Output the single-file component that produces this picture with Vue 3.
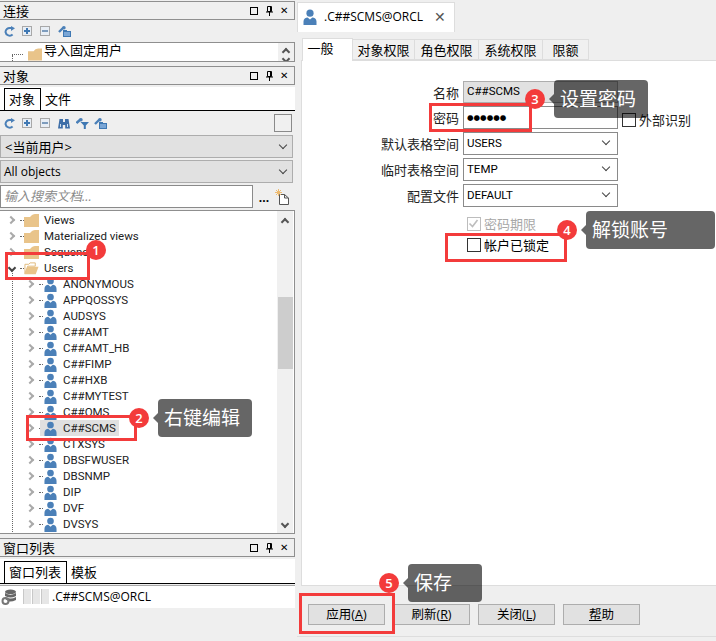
<template>
  <!-- sprite des icônes -->
  <svg class="sprite" aria-hidden="true">
    <symbol id="i-user" viewBox="0 0 14 16">
      <circle cx="7" cy="4.2" r="3.6" fill="#4b80b8" />
      <path d="M0.5 16 V12.5 C0.5 9.8 2.6 8.6 4.6 8.4 L7 10.4 L9.4 8.4 C11.4 8.6 13.5 9.8 13.5 12.5 V16 Z" fill="#4b80b8" />
    </symbol>
    <symbol id="i-folder" viewBox="0 0 15 13">
      <path d="M0 3 H6 L8 1 Q10 0 11 0 H15 V13 H0 Z" fill="#e9c48a" />
    </symbol>
    <symbol id="i-open" viewBox="0 0 16 13">
      <path d="M1 12 V2 H5 L6.5 0.5 H12 V4 H4 Z" fill="#fff" stroke="#e0b877" stroke-width="1" />
      <path d="M0.5 12.5 L3.5 4.5 H15.5 L12.5 12.5 Z" fill="#e9c48a" />
    </symbol>
    <symbol id="i-refresh" viewBox="0 0 11 11">
      <path d="M8.6 8.6 A4.3 4.3 0 0 1 1.5 6 A4.2 4.2 0 0 1 6 2 H8" fill="none" stroke="#4b80b8" stroke-width="2" />
      <path d="M7 0 L11 2.2 L7 5 Z" fill="#4b80b8" />
    </symbol>
    <symbol id="i-plus" viewBox="0 0 10 10">
      <rect x="0.5" y="0.5" width="9" height="9" fill="#e8eef5" stroke="#a8a8a8" />
      <path d="M2 5 H8 M5 2 V8" stroke="#3f78b3" stroke-width="2" />
    </symbol>
    <symbol id="i-minus" viewBox="0 0 10 10">
      <rect x="0.5" y="0.5" width="9" height="9" fill="#e8eef5" stroke="#a8a8a8" />
      <path d="M2 5 H8" stroke="#7d9cbd" stroke-width="2" />
    </symbol>
    <symbol id="i-keyfolder" viewBox="0 0 13 11">
      <path d="M1 6 L6 1" stroke="#4b80b8" stroke-width="2.4" />
      <circle cx="6" cy="1.8" r="1.7" fill="#4b80b8" />
      <rect x="5.5" y="5.5" width="7" height="5" fill="#7aa6d6" stroke="#3f78b3" />
      <rect x="5" y="4" width="4" height="2" fill="#3f78b3" />
    </symbol>
    <symbol id="i-binoculars" viewBox="0 0 12 11">
      <path d="M1.5 1 H5 V4 H7 V1 H10.5 L12 10.5 H7.2 V7 H4.8 V10.5 H0 Z" fill="#3f6fa8" />
      <path d="M2.5 6 V9 M9.5 6 V9" stroke="#cfe0f2" />
    </symbol>
    <symbol id="i-funnel" viewBox="0 0 13 11">
      <path d="M0.5 5 L5 1" stroke="#4b80b8" stroke-width="2.4" />
      <circle cx="5" cy="1.8" r="1.7" fill="#4b80b8" />
      <path d="M4.5 4 H13 L9.8 7.5 V11 H7.8 V7.5 Z" fill="#3f78b3" />
    </symbol>
    <symbol id="i-pin" viewBox="0 0 7 10">
      <path d="M1.5 0.5 H5.5 V5.5 H1.5 Z M0 6 H7 M3.5 6 V10" fill="none" stroke="#000" />
      <path d="M4.5 0.5 V5.5" stroke="#000" />
    </symbol>
    <symbol id="i-db" viewBox="0 0 16 16">
      <ellipse cx="9.5" cy="2.8" rx="5.5" ry="2.3" fill="#666" />
      <path d="M4 4 Q9.5 7.5 15 4 V7 Q9.5 10 4 7 Z M4 8 Q9.5 11 15 8 V11 Q11 13 8 12.5 L4 10 Z" fill="#666" />
      <circle cx="4.5" cy="12" r="3" fill="none" stroke="#777" stroke-width="2" />
    </symbol>
    <symbol id="i-newdoc" viewBox="0 0 15 16">
      <path d="M4.5 5.5 H9.5 L13.5 9 V15.5 H4.5 Z M9.5 5.5 V9 H13.5" fill="#fff" stroke="#555" />
      <path d="M3.5 0 V7 M0 3.5 H7 M1 1 L6 6 M6 1 L1 6" stroke="#eebb70" />
    </symbol>
  </svg>

  <div class="screen">
    <!-- colonne de gauche -->
    <aside class="left">
      <div class="dock-head first">
        <span>连接</span>
        <span class="dock-btns">
          <i class="btn-box"></i>
          <svg class="btn-pin"><use href="#i-pin" /></svg>
          <span class="btn-x">✕</span>
        </span>
      </div>
      <div class="toolbar t-one">
        <svg class="ic11"><use href="#i-refresh" /></svg>
        <svg class="ic10"><use href="#i-plus" /></svg>
        <svg class="ic10"><use href="#i-minus" /></svg>
        <svg class="ic13"><use href="#i-keyfolder" /></svg>
      </div>
      <div class="fixed-list">
        <span class="dots-h long"></span>
        <svg class="folder"><use href="#i-folder" /></svg>
        <span class="fixed-name">导入固定用户</span>
        <div class="mini-scroll">
          <span class="chev up"></span>
          <span class="chev down"></span>
        </div>
      </div>

      <div class="dock-head second">
        <span>对象</span>
        <span class="dock-btns">
          <i class="btn-box"></i>
          <svg class="btn-pin"><use href="#i-pin" /></svg>
          <span class="btn-x">✕</span>
        </span>
      </div>
      <div class="strip strip-obj">
        <span class="strip-tab on">对象</span>
        <span class="strip-tab">文件</span>
      </div>
      <div class="toolbar t-two">
        <svg class="ic11"><use href="#i-refresh" /></svg>
        <svg class="ic10"><use href="#i-plus" /></svg>
        <svg class="ic10"><use href="#i-minus" /></svg>
        <svg class="ic12"><use href="#i-binoculars" /></svg>
        <svg class="ic13"><use href="#i-funnel" /></svg>
        <svg class="ic13"><use href="#i-keyfolder" /></svg>
        <i class="big-square"></i>
      </div>
      <div class="dd dd-user"><span>&lt;当前用户&gt;</span><span class="chev-d"></span></div>
      <div class="dd dd-all"><span>All objects</span><span class="chev-d"></span></div>
      <div class="search-row">
        <div class="search-input">输入搜索文档...</div>
        <span class="more">...</span>
        <svg class="newdoc"><use href="#i-newdoc" /></svg>
      </div>

      <div class="tree">
        <div class="tree-rows">
          <div v-for="f in folders" :key="f" class="row">
            <span class="arrow"></span>
            <span class="dots-h"></span>
            <svg class="folder-sm"><use href="#i-folder" /></svg>
            <span class="row-name">{{ f }}</span>
          </div>
          <div class="row">
            <span class="arrow open"></span>
            <span class="dots-h"></span>
            <svg class="folder-sm"><use href="#i-open" /></svg>
            <span class="row-name">Users</span>
          </div>
          <div class="children">
            <div v-for="u in users" :key="u" class="row child">
              <span class="arrow"></span>
              <span class="dots-h"></span>
              <span class="who" :class="{ picked: u === 'C##SCMS' }">
                <svg class="user"><use href="#i-user" /></svg>
                <span class="row-name">{{ u }}</span>
              </span>
            </div>
          </div>
        </div>
        <div class="scrollbar">
          <span class="chev up"></span>
          <div class="thumb"></div>
          <span class="chev down"></span>
        </div>
      </div>

      <div class="dock-head third">
        <span>窗口列表</span>
        <span class="dock-btns">
          <i class="btn-box"></i>
          <svg class="btn-pin"><use href="#i-pin" /></svg>
          <span class="btn-x">✕</span>
        </span>
      </div>
      <div class="strip strip-win">
        <span class="strip-tab on wide">窗口列表</span>
        <span class="strip-tab">模板</span>
      </div>
      <div class="win-row">
        <svg class="db"><use href="#i-db" /></svg>
        <i class="swatch"></i><i class="swatch"></i><i class="swatch"></i>
        <span class="win-name">.C##SCMS@ORCL</span>
      </div>
    </aside>

    <!-- zone d'édition -->
    <main class="right">
      <div class="doc-tabs">
        <div class="doc-tab">
          <svg class="doc-user"><use href="#i-user" /></svg>
          <span class="doc-title">.C##SCMS@ORCL</span>
          <span class="doc-close">✕</span>
        </div>
      </div>
      <div class="sheet-tabs">
        <span v-for="(t, i) in sheetTabs" :key="t.name" class="sheet-tab" :class="[t.cls, { on: i === 0 }]">{{ t.name }}</span>
      </div>
      <div class="sheet">
        <div class="form">
          <label>名称</label>
          <div class="field grey">C##SCMS</div>
          <span></span>
          <label>密码</label>
          <div class="field pwd">●●●●●●</div>
          <div class="ext"><i class="check"></i>外部识别</div>
          <template v-for="s in selects" :key="s.label">
            <label>{{ s.label }}</label>
            <div class="field"><span>{{ s.value }}</span><span class="chev-d"></span></div>
            <span></span>
          </template>
        </div>
        <div class="checks">
          <div class="check-row off">
            <i class="check ticked">
              <svg width="11" height="11" viewBox="0 0 11 11"><path d="M1.5 5.5 L4.5 8.5 L9.5 2" fill="none" stroke="#bdbdbd" stroke-width="1.6" /></svg>
            </i>密码期限
          </div>
          <div class="check-row"><i class="check"></i>帐户已锁定</div>
        </div>
      </div>
      <div class="actions">
        <button class="act">应用(<u>A</u>)</button>
        <button class="act">刷新(<u>R</u>)</button>
        <button class="act">关闭(<u>L</u>)</button>
        <button class="act"><u>帮</u>助</button>
      </div>
    </main>

    <!-- annotations par-dessus la capture -->
    <div class="red r1"></div>
    <div class="red r2"></div>
    <div class="red r3"></div>
    <div class="red r4"></div>
    <div class="red r5"></div>
    <span class="badge b1">1</span>
    <span class="badge b2">2</span>
    <span class="badge b3">3</span>
    <span class="badge b4">4</span>
    <span class="badge b5">5</span>
    <div class="tip t2">右键编辑</div>
    <div class="tip t3">设置密码</div>
    <div class="tip t4">解锁账号</div>
    <div class="tip t5">保存</div>
  </div>
</template>

<script setup>
const folders = ['Views', 'Materialized views', 'Sequences']
const users = ['ANONYMOUS', 'APPQOSSYS', 'AUDSYS', 'C##AMT', 'C##AMT_HB', 'C##FIMP', 'C##HXB', 'C##MYTEST', 'C##OMS', 'C##SCMS', 'CTXSYS', 'DBSFWUSER', 'DBSNMP', 'DIP', 'DVF', 'DVSYS']
const sheetTabs = [
  { name: '一般', cls: 's0' },
  { name: '对象权限', cls: 's1' },
  { name: '角色权限', cls: 's2' },
  { name: '系统权限', cls: 's3' },
  { name: '限额', cls: 's4' }
]
const selects = [
  { label: '默认表格空间', value: 'USERS' },
  { label: '临时表格空间', value: 'TEMP' },
  { label: '配置文件', value: 'DEFAULT' }
]
</script>

<style>
html, body { margin: 0; height: 100%; overflow: hidden; background: #efefef; }
</style>

<style scoped>
.sprite { position: absolute; width: 0; height: 0; }
.screen {
  position: relative;
  display: flex;
  width: 716px;
  height: 641px;
  overflow: hidden;
  background: #efefef;
  color: #000;
  font-family: "Open Sans", "Noto Sans CJK SC", sans-serif;
  font-size: 12px;
}
svg { display: block; flex: none; }
i { display: block; flex: none; }

/* gauche */
.left { width: 295px; flex: none; display: flex; flex-direction: column; }
.dock-head {
  height: 19px;
  box-sizing: border-box;
  border: 1px solid #8f8f8f;
  border-left: 0;
  display: flex;
  align-items: center;
  justify-content: space-between;
  padding-left: 3px;
  font-size: 13px;
}
.first { margin-top: 1px; }
.second { margin-top: 4px; }
.third { margin-top: 4px; }
.dock-btns { display: flex; align-items: center; }
.btn-box { width: 6px; height: 6px; border: 1px solid #000; margin-right: 8px; }
.btn-pin { width: 7px; height: 10px; margin-right: 7px; }
.btn-x { width: 12px; font-size: 10px; line-height: 10px; margin-right: 2px; font-family: "DejaVu Sans", sans-serif; }

.toolbar { display: flex; align-items: center; flex: none; }
.t-one { height: 22px; padding-left: 4px; }
.t-two { height: 24px; padding-left: 4px; }
.ic11 { width: 11px; height: 11px; margin-right: 7px; }
.ic10 { width: 10px; height: 10px; margin-right: 8px; }
.ic12 { width: 12px; height: 11px; margin-right: 6px; }
.ic13 { width: 13px; height: 11px; margin-right: 5px; }
.big-square { margin-left: auto; margin-right: 3px; width: 16px; height: 16px; border: 1px solid #8a8a8a; background: #f0f0f0; }

.fixed-list {
  height: 20px;
  box-sizing: border-box;
  border: 1px solid #8f8f8f;
  border-left: 0;
  background: #fff;
  display: flex;
  align-items: center;
  padding-left: 12px;
  position: relative;
}
.dots-h { width: 4px; height: 0; border-top: 1px dotted #666; flex: none; }
.dots-h.long { width: 11px; margin-right: 5px; margin-top: 4px; position: relative; }
.dots-h.long::before { content: ""; position: absolute; left: 0; top: 0; height: 6px; border-left: 1px dotted #666; }
.folder { width: 14px; height: 13px; margin-top: 4px; }
.fixed-name { margin-left: 2px; font-size: 13px; line-height: 16px; margin-top: -5px; }
.mini-scroll { position: absolute; right: 0; top: 0; bottom: 0; width: 16px; background: #f0f0f0; overflow: hidden; }
.mini-scroll .up { position: absolute; left: 5px; top: 6px; }
.mini-scroll .down { position: absolute; left: 5px; top: 13px; }

.chev { display: block; width: 6px; height: 6px; border-left: 2px solid #555; border-top: 2px solid #555; box-sizing: border-box; }
.chev.up { transform: rotate(45deg); }
.chev.down { transform: rotate(225deg); }
.chev-d { width: 6px; height: 6px; box-sizing: border-box; border-right: 1px solid #444; border-bottom: 1px solid #444; transform: rotate(45deg); margin-top: -3px; }

.strip { display: flex; align-items: flex-end; background: #fff; border-bottom: 1px solid #000; box-sizing: border-box; padding-left: 4px; flex: none; font-size: 13px; }
.strip-obj { margin-top: 2px; height: 24px; }
.strip-win { margin-top: 2px; height: 25px; }
.strip-tab { height: 21px; line-height: 21px; padding: 0 4px; }
.strip-tab.on { box-sizing: border-box; height: 22px; border: 1px solid #000; border-bottom: 0; padding: 0 4px; background: #fff; width: 37px; }
.strip-tab.wide { width: 63px; }

.dd {
  width: 293px;
  height: 23px;
  box-sizing: border-box;
  background: #e1e1e1;
  border: 1px solid #adadad;
  display: flex;
  align-items: center;
  justify-content: space-between;
  padding: 0 6px 0 3px;
}
.dd-all { margin-top: 2px; }
.dd-user { padding-left: 4px; font-size: 13px; }
.search-row { display: flex; align-items: center; margin-top: 2px; height: 23px; }
.search-input {
  width: 253px;
  height: 23px;
  box-sizing: border-box;
  background: #fff;
  border: 1px solid #8a8a8a;
  padding-left: 3px;
  line-height: 20px;
  color: #8a8a8a;
  font-style: italic;
  font-size: 13px;
}
.more { width: 22px; text-align: center; font-weight: 700; margin-left: 0; margin-top: 1px; }
.newdoc { width: 15px; height: 16px; }

.tree {
  margin-top: 2px;
  height: 324px;
  box-sizing: border-box;
  border: 1px solid #8f8f8f;
  border-left: 0;
  background: #fff;
  display: flex;
  position: relative;
  overflow: hidden;
}
.tree-rows { flex: 1; padding-top: 1px; min-width: 0; }
.row { height: 16px; display: flex; align-items: center; padding-left: 8px; white-space: nowrap; color: #222; font-family: Roboto, sans-serif; font-size: 11.5px; }
.arrow {
  width: 6px;
  height: 6px;
  box-sizing: border-box;
  border-top: 2px solid #aaa;
  border-right: 2px solid #aaa;
  transform: rotate(45deg);
  flex: none;
  margin-right: 6px;
}
.arrow.open { border-color: #444; transform: rotate(135deg); margin-left: 1px; margin-right: 5px; }
.folder-sm { width: 15px; height: 13px; margin-left: 0; }
.row-name { margin-left: 5px; }
.children { position: relative; }
.children::before { content: ""; position: absolute; left: 12px; top: -5px; bottom: -10px; border-left: 1px dotted #666; }
.child { padding-left: 27px; }
.who { display: flex; align-items: center; height: 16px; }
.user { width: 13px; height: 15px; }
.child .row-name { margin-left: 6px; line-height: 16px; }
.child .dots-h { margin-right: 1px; }
.picked { background: #e0e0e0; margin-left: -4px; padding-left: 4px; padding-right: 3px; }
.scrollbar {
  width: 16px;
  margin-right: 1px;
  background: #f0f0f0;
  flex: none;
  display: flex;
  flex-direction: column;
  align-items: center;
}
.scrollbar .up { margin-top: 8px; }
.scrollbar .down { margin-bottom: 6px; }
.thumb { width: 15px; height: 72px; background: #cdcdcd; margin-top: 72px; margin-bottom: auto; }

.win-row {
  margin-top: 1px;
  height: 23px;
  box-sizing: border-box;
  border-top: 1px solid #a8a8a8;
  background: #fff;
  display: flex;
  align-items: center;
  padding: 0 0 1px 1px;
}
.db { width: 16px; height: 16px; margin-right: 6px; }
.swatch { width: 7px; height: 15px; background: #e6e6e6; border-left: 1px solid #c8c8c8; margin-right: 1px; }
.win-name { margin-left: 2px; }

/* droite */
.right { flex: 1; min-width: 0; display: flex; flex-direction: column; padding-left: 2px; }
.doc-tabs { height: 34px; box-sizing: border-box; padding-top: 2px; flex: none; }
.doc-tab {
  width: 158px;
  height: 30px;
  box-sizing: border-box;
  background: #fff;
  border: 1px solid #ddd;
  border-bottom: 0;
  display: flex;
  align-items: center;
  padding-left: 5px;
}
.doc-user { width: 14px; height: 16px; margin-right: 7px; margin-top: -2px; }
.doc-title { width: 110px; margin-top: -2px; }
.doc-close { font-size: 14px; color: #555; font-weight: 700; font-family: "DejaVu Sans", sans-serif; margin-top: -1px; }

.sheet-tabs { height: 25px; padding-left: 5px; display: flex; align-items: flex-end; flex: none; margin-top: 2px; margin-bottom: -1px; position: relative; z-index: 1; }
.sheet-tab {
  height: 21px;
  line-height: 20px;
  box-sizing: border-box;
  background: #f0f0f0;
  border: 1px solid #ddd;
  border-left: 0;
  text-align: center;
  font-size: 13px;
  margin-bottom: 1px;
}
.s0 { width: 51px; }
.s1 { width: 62px; }
.s2 { width: 64px; }
.s3 { width: 64px; }
.s4 { width: 46px; }
.sheet-tab.on { height: 23px; background: #fff; border: 1px solid #ddd; border-bottom: 0; margin-bottom: 0; line-height: 19px; padding-right: 14px; }

.sheet {
  height: 526px;
  box-sizing: border-box;
  margin-left: 4px;
  background: #fff;
  border-top: 1px solid #ddd;
  border-bottom: 1px solid #ddd;
  border-left: 1px solid #ddd;
  padding-top: 20px;
  flex: none;
}
.form {
  display: grid;
  grid-template-columns: 157px 155px 1fr;
  grid-template-rows: 22px 23px 23px 23px 23px;
  row-gap: 3px;
  column-gap: 4px;
  align-items: center;
}
.form label { text-align: right; font-size: 13px; color: #222; }
.field {
  height: 100%;
  box-sizing: border-box;
  border: 1px solid #8a8a8a;
  display: flex;
  align-items: center;
  justify-content: space-between;
  padding: 0 8px 2px 3px;
  font-family: Roboto, sans-serif;
  font-size: 11.5px;
}
.field.grey { background: #e1e1e1; border-color: #adadad; }
.field.pwd { font-size: 7.5px; letter-spacing: 0; font-family: "DejaVu Sans", sans-serif; padding: 0 0 0 3px; justify-content: flex-start; }
.ext { display: flex; align-items: center; font-size: 13px; margin-top: 4px; color: #222; }
.ext .check { margin-right: 3px; }
.check { width: 12px; height: 12px; border: 1px solid #333; background: #fff; margin-right: 3px; }
.checks { margin-left: 165px; margin-top: 6px; }
.check-row { height: 21px; display: flex; align-items: center; font-size: 13px; }
.check-row.off { color: #a8a8a8; }
.ticked { border-color: #bdbdbd; }
.actions { display: flex; gap: 8px; padding: 18px 0 0 11px; flex: none; height: 51px; box-sizing: border-box; border-bottom: 1px solid #ddd; }
.act {
  width: 77px;
  height: 21px;
  padding: 0;
  box-sizing: border-box;
  background: #e1e1e1;
  border: 1px solid #adadad;
  font-family: inherit;
  font-size: 12.5px;
  line-height: 18px;
  color: #000;
}

/* annotations */
.red { position: absolute; box-sizing: border-box; border: 3px solid #f33b3b; }
.r1 { left: 5px; top: 252px; width: 85px; height: 28px; }
.r2 { left: 26px; top: 415px; width: 111px; height: 26px; }
.r3 { left: 429px; top: 103px; width: 103px; height: 29px; }
.r4 { left: 445px; top: 233px; width: 122px; height: 29px; }
.r5 { left: 299px; top: 593px; width: 96px; height: 41px; }
.badge {
  position: absolute;
  width: 20px;
  height: 20px;
  border-radius: 50%;
  background: #f33b3b;
  color: #fff;
  text-align: center;
  line-height: 20px;
  font-size: 13px;
  font-weight: 600;
}
.b1 { left: 86px; top: 240px; }
.b2 { left: 129px; top: 408px; }
.b3 { left: 525px; top: 89px; }
.b4 { left: 557px; top: 220px; }
.b5 { left: 379px; top: 573px; }
.tip {
  position: absolute;
  height: 38px;
  box-sizing: border-box;
  padding-left: 6px;
  background: rgba(0, 0, 0, 0.6);
  border-radius: 4px;
  color: #fff;
  font-size: 19px;
  line-height: 38px;
  white-space: nowrap;
}
.tip::before {
  content: "";
  position: absolute;
  left: -5px;
  top: 14px;
  border-right: 5px solid rgba(0, 0, 0, 0.6);
  border-top: 5px solid transparent;
  border-bottom: 5px solid transparent;
}
.t2 { left: 158px; top: 399px; width: 94px; }
.t3 { left: 554px; top: 80px; width: 94px; }
.t4 { left: 586px; top: 211px; width: 129px; }
.t5 { left: 408px; top: 564px; width: 74px; }
</style>
